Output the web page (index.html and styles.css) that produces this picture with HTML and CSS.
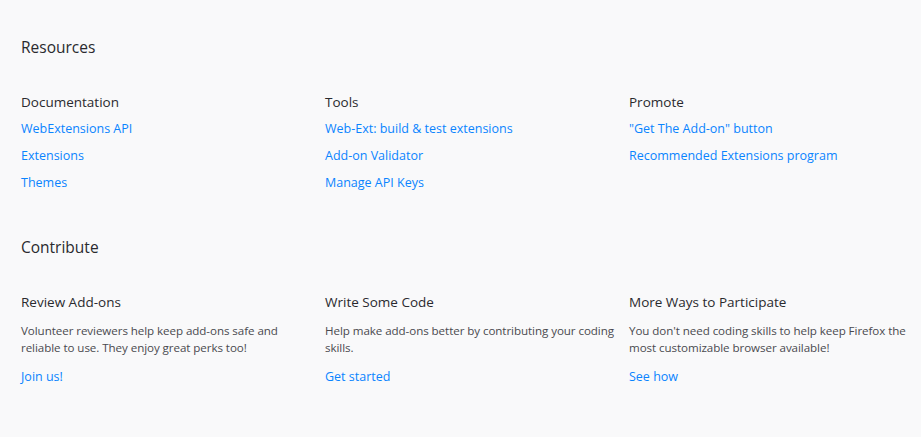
FILE: index.html
```html
<!DOCTYPE html>
<html lang="en">
<head>
<meta charset="utf-8">
<title>Resources</title>
<link rel="stylesheet" href="styles.css">
</head>
<body>
<main class="page">
  <section class="section section-resources">
    <h2 class="section-title">Resources</h2>
    <div class="columns">
      <div class="col">
        <h3 class="col-title">Documentation</h3>
        <ul class="links">
          <li><a href="#">WebExtensions API</a></li>
          <li><a href="#">Extensions</a></li>
          <li><a href="#">Themes</a></li>
        </ul>
      </div>
      <div class="col">
        <h3 class="col-title">Tools</h3>
        <ul class="links">
          <li><a href="#">Web-Ext: build &amp; test extensions</a></li>
          <li><a href="#">Add-on Validator</a></li>
          <li><a href="#">Manage API Keys</a></li>
        </ul>
      </div>
      <div class="col">
        <h3 class="col-title">Promote</h3>
        <ul class="links">
          <li><a href="#">"Get The Add-on" button</a></li>
          <li><a href="#">Recommended Extensions program</a></li>
        </ul>
      </div>
    </div>
  </section>
  <section class="section section-contribute">
    <h2 class="section-title">Contribute</h2>
    <div class="columns">
      <div class="col">
        <h3 class="col-title">Review Add-ons</h3>
        <p class="col-text">Volunteer reviewers help keep add-ons safe and reliable to use. They enjoy great perks too!</p>
        <a class="col-link" href="#">Join us!</a>
      </div>
      <div class="col">
        <h3 class="col-title">Write Some Code</h3>
        <p class="col-text">Help make add-ons better by contributing your coding skills.</p>
        <a class="col-link" href="#">Get started</a>
      </div>
      <div class="col">
        <h3 class="col-title">More Ways to Participate</h3>
        <p class="col-text">You don't need coding skills to help keep Firefox the most customizable browser available!</p>
        <a class="col-link" href="#">See how</a>
      </div>
    </div>
  </section>
</main>
</body>
</html>
```
FILE: styles.css
```css
html, body {
  margin: 0;
  padding: 0;
  background: #f9f9fa;
  overflow: hidden;
}
body {
  font-family: "Open Sans", "Liberation Sans", sans-serif;
  color: #38383d;
}
.page {
  padding: 37px 0 0 21px;
}
.section-title {
  margin: 0;
  font-size: 15.5px;
  line-height: 20px;
  font-weight: 400;
  color: #2a2a2e;
}
.columns {
  display: grid;
  grid-template-columns: repeat(3, 292px);
  column-gap: 12px;
  margin-top: 36px;
}
.col {
  display: flex;
  flex-direction: column;
  align-items: flex-start;
}
.col-title {
  margin: 0;
  font-size: 13.5px;
  line-height: 18px;
  font-weight: 400;
  color: #2a2a2e;
}
.links {
  list-style: none;
  margin: 9px 0 0;
  padding: 0;
  display: flex;
  flex-direction: column;
  gap: 10px;
}
.links li {
  font-size: 12.5px;
  line-height: 17px;
}
.links a, .col-link {
  display: block;
  font-size: 12.5px;
  line-height: 17px;
  color: #0a84ff;
  text-decoration: none;
}
.section-contribute {
  margin-top: 46px;
}
.col-text {
  margin: 11px 0 0;
  font-size: 11.6px;
  line-height: 17px;
  letter-spacing: -0.07px;
  color: #4a4a4f;
}
.col-link {
  margin-top: 12px;
}
```
